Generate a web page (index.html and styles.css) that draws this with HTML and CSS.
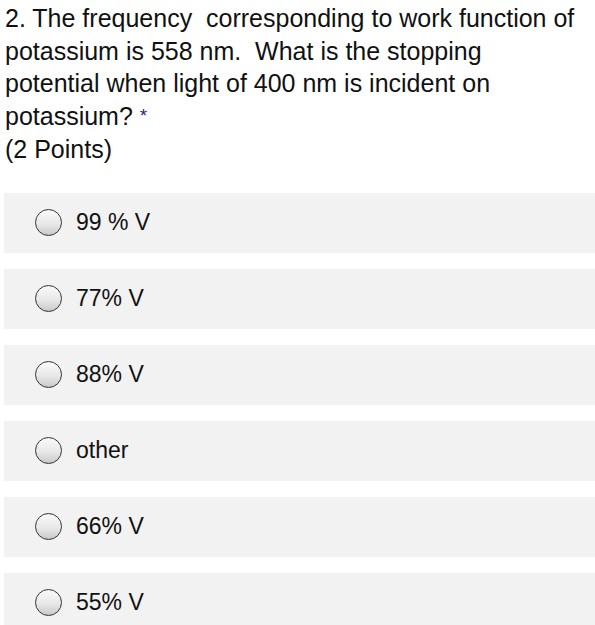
FILE: index.html
```html
<!DOCTYPE html>
<html>
<head>
<meta charset="utf-8">
<link rel="stylesheet" href="styles.css">
</head>
<body>
<div class="question">
  <div class="title">2. The frequency&nbsp; corresponding to work function of<br>potassium is 558 nm.&nbsp; What is the stopping<br>potential when light of 400 nm is incident on<br>potassium? <span class="req">*</span></div>
  <div class="points">(2 Points)</div>
</div>
<div class="options">
  <div class="option"><span class="radio"></span><span class="label">99 % V</span></div>
  <div class="option"><span class="radio"></span><span class="label">77% V</span></div>
  <div class="option"><span class="radio"></span><span class="label">88% V</span></div>
  <div class="option"><span class="radio"></span><span class="label">other</span></div>
  <div class="option"><span class="radio"></span><span class="label">66% V</span></div>
  <div class="option"><span class="radio"></span><span class="label">55% V</span></div>
</div>
</body>
</html>
```
FILE: styles.css
```css
html, body {
  margin: 0;
  padding: 0;
  background: #fff;
}
body {
  font-family: "Liberation Sans", Arial, sans-serif;
  color: #111;
  overflow: hidden;
}
.question {
  padding: 2px 0 0 5px;
  font-size: 25px;
  line-height: 32.7px;
  white-space: nowrap;
}
.req {
  color: #1f1f8f;
  font-size: 19px;
  vertical-align: 3px;
}
.options {
  display: flex;
  flex-direction: column;
  gap: 16px;
  padding-left: 4px;
  margin-top: 27px;
}
.option {
  background: #f2f2f2;
  height: 60px;
  flex: none;
  display: flex;
  align-items: center;
  padding-left: 31px;
}
.radio {
  width: 25px;
  height: 25px;
  border: 1.5px solid #333;
  border-radius: 50%;
  background: linear-gradient(to bottom, #fafafa 0%, #e8e8e8 55%, #c9c9c9 100%);
  flex: none;
}
.label {
  margin-left: 14px;
  font-size: 23px;
  color: #111;
}
```
